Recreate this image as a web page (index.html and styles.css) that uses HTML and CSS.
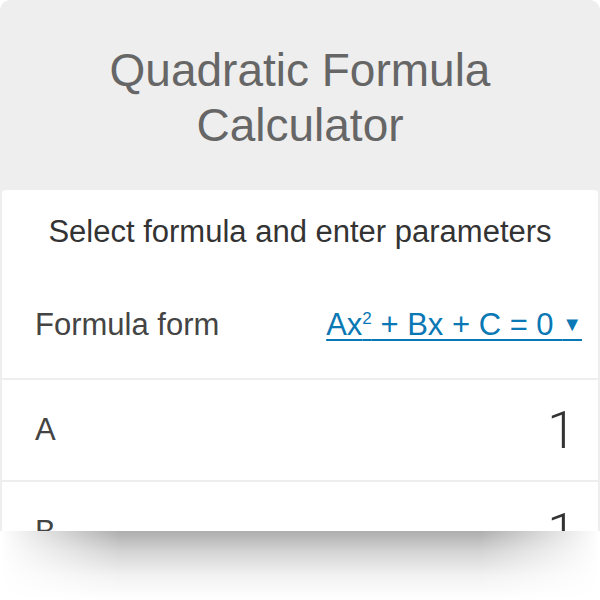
FILE: index.html
```html
<!DOCTYPE html>
<html lang="en">
    <head>
        <meta charset="UTF-8" />
        <meta name="viewport" content="width=device-width, initial-scale=1.0" />
        <title>Quadratic Formula Calculator</title>
        <link rel="stylesheet" href="styles.css">
    </head>
    <body>
        <div class="calculator">
            <!-- Header -->
            <div class="calc-header">
                <h1>Quadratic Formula<br>Calculator</h1>
            </div>

            <div class="calc-body">
                <div class="section section-first">
                    <p class="section-title">Select formula and enter parameters</p>
                    <div class="row row-formula">
                        <span class="label">Formula form</span>
                        <a class="formula-select" href="#">Ax<sup>2</sup> + Bx + C = 0 <span class="caret">▼</span></a>
                    </div>
                </div>

                <div class="section row row-value">
                    <span class="label">A</span>
                    <span class="value">1</span>
                </div>

                <div class="section row row-value">
                    <span class="label">B</span>
                    <span class="value">1</span>
                </div>
            </div>
        </div>
        <div class="calc-shadow"></div>
    </body>
</html>
```

FILE: styles.css
```css
body {
    font-family: "Liberation Sans", Arial, sans-serif;
    margin: 0;
    background-color: #fff;
}
.calculator {
    width: 600px;
    height: 531px;
    overflow: hidden;
    background: #eee;
    border-radius: 10px 10px 0 0;
}
.calc-shadow {
    width: 600px;
    height: 69px;
    background: linear-gradient(to bottom, rgba(0,0,0,0.32) 0%, rgba(0,0,0,0.17) 30%, rgba(0,0,0,0.05) 65%, rgba(0,0,0,0) 100%);
    -webkit-mask-image: linear-gradient(to right, transparent 0%, #000 20%, #000 80%, transparent 100%);
    mask-image: linear-gradient(to right, transparent 0%, #000 20%, #000 80%, transparent 100%);
}
.calc-header {
    height: 190px;
    padding-top: 43px;
    box-sizing: border-box;
    text-align: center;
}
h1 {
    margin: 0;
    font-size: 46px;
    font-weight: normal;
    line-height: 55px;
    color: #666;
}
.calc-body {
    display: flex;
    flex-direction: column;
    gap: 2px;
    margin: 0 2px;
}
.section {
    background: #fff;
}
.section-first {
    height: 188px;
    border-radius: 4px 4px 0 0;
}
.section-title {
    margin: 0;
    padding-top: 24px;
    font-size: 31px;
    line-height: 36px;
    text-align: center;
    color: #333;
}
.row {
    display: flex;
    align-items: center;
    justify-content: space-between;
    padding: 0 16px 0 33px;
}
.row-formula {
    height: 56px;
    margin-top: 47px;
}
.label {
    font-size: 31px;
    color: #444;
}
.formula-select {
    font-size: 31px;
    color: #0a78b4;
    text-decoration: underline;
    text-decoration-thickness: 2px;
    text-underline-offset: 4px;
}
.formula-select sup {
    font-size: 17px;
    line-height: 0;
    vertical-align: 11px;
}
.caret {
    font-size: 20px;
    vertical-align: 4px;
}
.row-value {
    height: 100px;
    padding-right: 22px;
}
.value {
    font-family: Roboto, "Liberation Sans", sans-serif;
    font-weight: 300;
    font-size: 52px;
    color: #333;
}
```
